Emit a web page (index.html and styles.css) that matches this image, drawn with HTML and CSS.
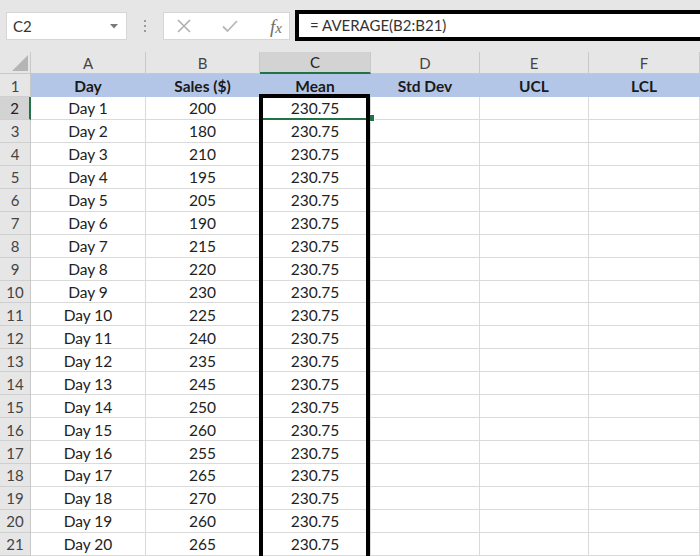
FILE: index.html
```html
<!DOCTYPE html>
<html>
<head>
<meta charset="utf-8">
<link rel="stylesheet" href="styles.css">
</head>
<body>
<div class="topbar">
  <div class="namebox">
    <span class="name">C2</span>
    <svg class="caret" width="8" height="5" viewBox="0 0 8 5"><path d="M0 0 L8 0 L4 4.5 Z" fill="#7a7a7a"/></svg>
  </div>
  <div class="grip"><i></i><i></i><i></i></div>
  <div class="fbuttons">
    <svg class="ic" width="16" height="16" viewBox="0 0 16 16"><path d="M2 2 L14 14 M14 2 L2 14" stroke="#b0b0b0" stroke-width="1.6" fill="none"/></svg>
    <svg class="ic" width="18" height="16" viewBox="0 0 18 16"><path d="M2 8.5 L6.5 13 L16 3" stroke="#b8b8b8" stroke-width="1.8" fill="none"/></svg>
    <span class="fx">f<span class="fxx">x</span></span>
  </div>
  <div class="formula">= AVERAGE(B2:B21)</div>
</div>
<div class="sheet">
  <div class="corner"><svg width="16" height="16" viewBox="0 0 16 16"><path d="M16 0 L16 16 L0 16 Z" fill="#b5b5b5"/></svg></div>
  <div class="ch">A</div><div class="ch">B</div><div class="ch sel">C</div><div class="ch">D</div><div class="ch">E</div><div class="ch">F</div>

  <div class="rh">1</div><div class="c hd">Day</div><div class="c hd">Sales ($)</div><div class="c hd">Mean</div><div class="c hd">Std Dev</div><div class="c hd">UCL</div><div class="c hd">LCL</div>
  <div class="rh rsel">2</div><div class="c">Day 1</div><div class="c">200</div><div class="c active">230.75</div><div class="c"></div><div class="c"></div><div class="c"></div>
  <div class="rh">3</div><div class="c">Day 2</div><div class="c">180</div><div class="c">230.75</div><div class="c"></div><div class="c"></div><div class="c"></div>
  <div class="rh">4</div><div class="c">Day 3</div><div class="c">210</div><div class="c">230.75</div><div class="c"></div><div class="c"></div><div class="c"></div>
  <div class="rh">5</div><div class="c">Day 4</div><div class="c">195</div><div class="c">230.75</div><div class="c"></div><div class="c"></div><div class="c"></div>
  <div class="rh">6</div><div class="c">Day 5</div><div class="c">205</div><div class="c">230.75</div><div class="c"></div><div class="c"></div><div class="c"></div>
  <div class="rh">7</div><div class="c">Day 6</div><div class="c">190</div><div class="c">230.75</div><div class="c"></div><div class="c"></div><div class="c"></div>
  <div class="rh">8</div><div class="c">Day 7</div><div class="c">215</div><div class="c">230.75</div><div class="c"></div><div class="c"></div><div class="c"></div>
  <div class="rh">9</div><div class="c">Day 8</div><div class="c">220</div><div class="c">230.75</div><div class="c"></div><div class="c"></div><div class="c"></div>
  <div class="rh">10</div><div class="c">Day 9</div><div class="c">230</div><div class="c">230.75</div><div class="c"></div><div class="c"></div><div class="c"></div>
  <div class="rh">11</div><div class="c">Day 10</div><div class="c">225</div><div class="c">230.75</div><div class="c"></div><div class="c"></div><div class="c"></div>
  <div class="rh">12</div><div class="c">Day 11</div><div class="c">240</div><div class="c">230.75</div><div class="c"></div><div class="c"></div><div class="c"></div>
  <div class="rh">13</div><div class="c">Day 12</div><div class="c">235</div><div class="c">230.75</div><div class="c"></div><div class="c"></div><div class="c"></div>
  <div class="rh">14</div><div class="c">Day 13</div><div class="c">245</div><div class="c">230.75</div><div class="c"></div><div class="c"></div><div class="c"></div>
  <div class="rh">15</div><div class="c">Day 14</div><div class="c">250</div><div class="c">230.75</div><div class="c"></div><div class="c"></div><div class="c"></div>
  <div class="rh">16</div><div class="c">Day 15</div><div class="c">260</div><div class="c">230.75</div><div class="c"></div><div class="c"></div><div class="c"></div>
  <div class="rh">17</div><div class="c">Day 16</div><div class="c">255</div><div class="c">230.75</div><div class="c"></div><div class="c"></div><div class="c"></div>
  <div class="rh">18</div><div class="c">Day 17</div><div class="c">265</div><div class="c">230.75</div><div class="c"></div><div class="c"></div><div class="c"></div>
  <div class="rh">19</div><div class="c">Day 18</div><div class="c">270</div><div class="c">230.75</div><div class="c"></div><div class="c"></div><div class="c"></div>
  <div class="rh">20</div><div class="c">Day 19</div><div class="c">260</div><div class="c">230.75</div><div class="c"></div><div class="c"></div><div class="c"></div>
  <div class="rh">21</div><div class="c">Day 20</div><div class="c">265</div><div class="c">230.75</div><div class="c"></div><div class="c"></div><div class="c"></div>

  <div class="selbox"></div>
</div>
</body>
</html>
```
FILE: styles.css
```css
html, body {
  margin: 0;
  padding: 0;
}
body {
  width: 700px;
  height: 556px;
  overflow: hidden;
  background: #e6e6e6;
  font-family: Lato, "Liberation Sans", sans-serif;
  color: #222;
}
.topbar {
  height: 52px;
  display: flex;
  align-items: flex-start;
  box-sizing: border-box;
  padding-top: 10px;
}
.namebox {
  margin-left: 6px;
  margin-top: 2px;
  width: 121px;
  height: 28px;
  box-sizing: border-box;
  background: #fff;
  border: 1px solid #d6d6d6;
  display: flex;
  align-items: center;
  justify-content: space-between;
  padding: 0 8px 0 6px;
}
.name {
  font-size: 15px;
  color: #333;
}
.caret {
  display: block;
}
.grip {
  width: 36px;
  height: 28px;
  margin-top: 2px;
  display: flex;
  flex-direction: column;
  align-items: center;
  justify-content: center;
  gap: 3px;
}
.grip i {
  display: block;
  width: 2px;
  height: 2px;
  background: #9a9a9a;
}
.fbuttons {
  margin-top: 2px;
  width: 127px;
  height: 28px;
  box-sizing: border-box;
  background: #fff;
  border: 1px solid #d6d6d6;
  display: flex;
  align-items: center;
  padding: 0 0 0 12px;
}
.fbuttons .ic {
  display: block;
}
.fbuttons .ic:first-child {
  margin-right: 29px;
}
.fbuttons .ic + .ic {
  margin-right: 31px;
}
.fx {
  font-family: "Liberation Serif", serif;
  font-style: italic;
  font-size: 19px;
  color: #6e6e6e;
  line-height: 1;
}
.fxx {
  font-size: 15px;
}
.formula {
  margin-left: 5px;
  flex: 1;
  height: 31px;
  box-sizing: border-box;
  border: 4px solid #000;
  border-right: none;
  background: #fff;
  font-size: 15px;
  color: #333;
  line-height: 23px;
  padding-left: 11px;
}
.sheet {
  position: relative;
  display: grid;
  grid-template-columns: 31px 115px 114px 111px 109px 109px 111px;
  grid-template-rows: 22px 23px repeat(20, 22.95px);
  background: #fff;
  font-size: 15.5px;
}
.corner {
  background: #e6e6e6;
  border-right: 1px solid #c8c8c8;
  border-bottom: 1px solid #c8c8c8;
  box-sizing: border-box;
  display: flex;
  align-items: flex-end;
  justify-content: flex-end;
  padding: 0 2px 2px 0;
}
.corner svg {
  display: block;
}
.ch {
  background: #e6e6e6;
  border-right: 1px solid #c9c9c9;
  border-bottom: 1px solid #c8c8c8;
  box-sizing: border-box;
  display: flex;
  align-items: center;
  justify-content: center;
  color: #444;
  font-size: 15px;
}
.ch.sel {
  background: #d3d3d3;
  border-bottom: 2px solid #217346;
  color: #222;
}
.rh {
  background: #e6e6e6;
  border-bottom: 1px solid #cfcfcf;
  border-right: 1px solid #c8c8c8;
  box-sizing: border-box;
  display: flex;
  align-items: center;
  justify-content: center;
  padding-top: 1px;
  color: #444;
  font-size: 15px;
}
.rh.rsel {
  background: #d3d3d3;
  border-right: 2px solid #217346;
  color: #222;
}
.c {
  border-right: 1px solid #dadada;
  border-bottom: 1px solid #dadada;
  box-sizing: border-box;
  display: flex;
  align-items: center;
  justify-content: center;
  padding-top: 1px;
  color: #222;
  white-space: nowrap;
}
.c.hd {
  background: #b4c6e7;
  font-weight: bold;
  border-right-color: #b4c6e7;
  border-bottom-color: #b4c6e7;
  color: #1a1a1a;
}
.c.active {
  position: relative;
  border-bottom: 2px solid #217346;
}
.c.active::after {
  content: "";
  position: absolute;
  right: -5px;
  bottom: -4px;
  width: 6px;
  height: 6px;
  background: #217346;
  border: 1px solid #fff;
}
.selbox {
  position: absolute;
  left: 259px;
  top: 42px;
  width: 111px;
  height: 470px;
  box-sizing: border-box;
  border: 4px solid #000;
  pointer-events: none;
  z-index: 2;
}
```
